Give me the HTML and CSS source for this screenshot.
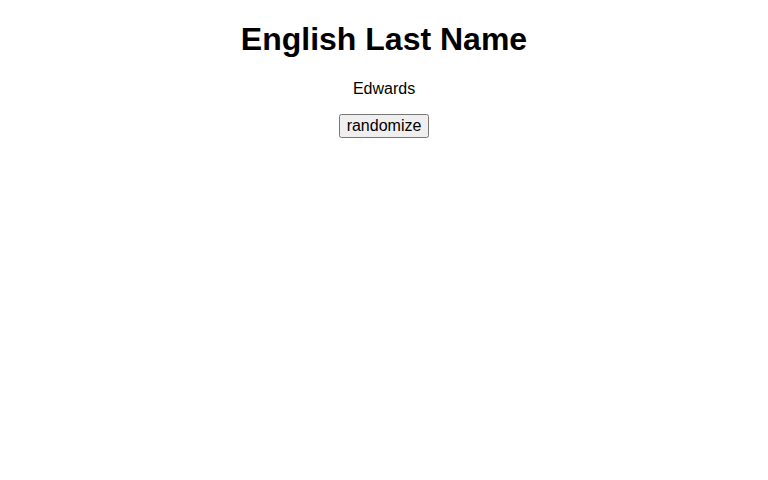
FILE: index.html
```html
<!DOCTYPE html>
<html lang="en">
<head>
    <meta charset="UTF-8">
    <meta name="viewport" content="width=device-width, initial-scale=1.0">
    <title>English Last Name</title>
    <link rel="stylesheet" href="styles.css">
</head>
<body>

<div class="container">
    <h1>English Last Name</h1>
    <div class="name" id="name">Edwards</div>
    <button class="randomize">randomize</button>
</div>

</body>
</html>
```

FILE: styles.css
```css
body {
    font-family: 'Liberation Sans', Arial, sans-serif;
    color: #000;
    background-color: #fff;
    margin: 0;
}

.container {
    text-align: center;
}

h1 {
    font-size: 32px;
    font-weight: 700;
}

.name {
    font-size: 16px;
    margin-bottom: 16px;
}

.randomize {
    font-family: 'Liberation Sans', Arial, sans-serif;
    font-size: 16px;
}
```
